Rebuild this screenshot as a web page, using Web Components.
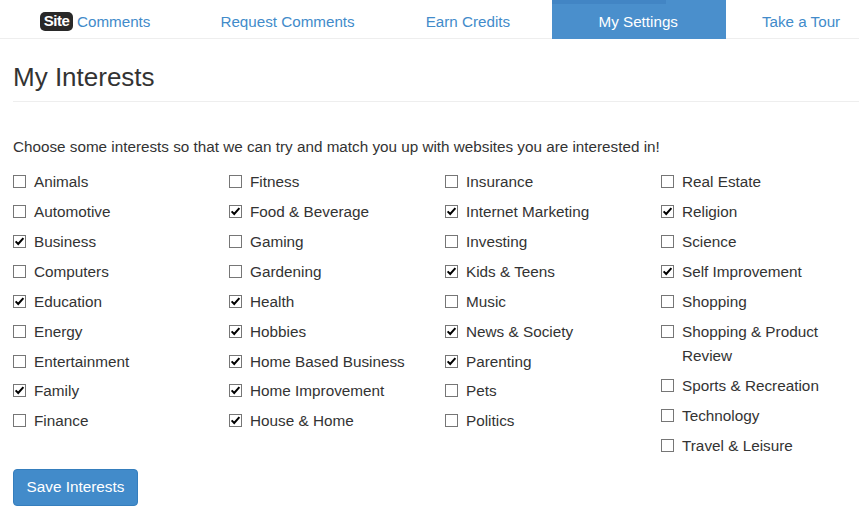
<!DOCTYPE html>
<html>
<head>
<meta charset="utf-8">
<title>My Interests</title>
<style>
html, body { margin: 0; padding: 0; background: #fff; }
body { font-family: "Liberation Sans", Arial, sans-serif; font-size: 15.3px; color: #333; overflow: hidden; }
</style>
</head>
<body>
<top-nav></top-nav>
<interests-page></interests-page>
<script>
const tabs = [
    { name: 'Comments', logo: true, left: 40, right: 35 },
    { name: 'Request Comments', left: 35, right: 35 },
    { name: 'Earn Credits', left: 36, right: 41.5 },
    { name: 'My Settings', active: true, left: 47, right: 48 },
    { name: 'Take a Tour', left: 36, right: 18 }
]

class TopNav extends HTMLElement {
    constructor() {
        super()
        this.attachShadow({ mode: 'open' })
    }

    connectedCallback() {
        this.shadowRoot.innerHTML = `<style>
:host { display: flex; height: 39px; box-sizing: border-box; border-bottom: 1px solid #eee; }
a { display: flex; align-items: center; height: 39px; box-sizing: border-box; color: #428bca; text-decoration: none; font-size: 15.2px; white-space: nowrap; position: relative; padding-top: 3px; }
a.active { background: #4a8fcc; color: #fff; }
a.active::before { content: ''; position: absolute; left: 0; top: 0; width: 114px; height: 4px; background: #4285c4; }
.logo { background: #292929; color: #fff; font-weight: bold; font-size: 15px; letter-spacing: -0.5px; border-radius: 5px; height: 19px; line-height: 18px; width: 33px; text-align: center; margin-right: 4px; }
</style>
${tabs.map(t => `<a href="#" class="${t.active ? 'active' : ''}" style="padding-left:${t.left}px;padding-right:${t.right}px">${t.logo ? '<span class="logo">Site</span>' : ''}${t.name}</a>`).join('')}`
    }
}

class InterestCheck extends HTMLElement {
    constructor() {
        super()
        this.attachShadow({ mode: 'open' })
    }

    connectedCallback() {
        const on = this.hasAttribute('checked')
        this.shadowRoot.innerHTML = `<style>
:host { display: block; margin-bottom: 5.85px; }
label { display: flex; align-items: flex-start; line-height: 24px; }
.box { flex: none; width: 13px; height: 13px; box-sizing: border-box; border: 1px solid #767676; background: #fff; margin: 5px 8px 0 0; position: relative; }
svg { position: absolute; left: 0; top: 0; }
</style>
<label><span class="box">${on ? '<svg width="11" height="11" viewBox="0 0 11 11"><path d="M1.6 5.4 L4.2 8 L9.4 2.2" fill="none" stroke="#000" stroke-width="2"/></svg>' : ''}</span><span><slot></slot></span></label>`
    }
}

const columns = [
    [['Animals'], ['Automotive'], ['Business', 1], ['Computers'], ['Education', 1], ['Energy'], ['Entertainment'], ['Family', 1], ['Finance']],
    [['Fitness'], ['Food & Beverage', 1], ['Gaming'], ['Gardening'], ['Health', 1], ['Hobbies', 1], ['Home Based Business', 1], ['Home Improvement', 1], ['House & Home', 1]],
    [['Insurance'], ['Internet Marketing', 1], ['Investing'], ['Kids & Teens', 1], ['Music'], ['News & Society', 1], ['Parenting', 1], ['Pets'], ['Politics']],
    [['Real Estate'], ['Religion', 1], ['Science'], ['Self Improvement', 1], ['Shopping'], ['Shopping & Product Review', 0, 'tall'], ['Sports & Recreation'], ['Technology'], ['Travel & Leisure']]
]

class InterestsPage extends HTMLElement {
    constructor() {
        super()
        this.attachShadow({ mode: 'open' })
    }

    connectedCallback() {
        const esc = s => s.replace(/&/g, '&amp;')
        this.shadowRoot.innerHTML = `<style>
:host { display: block; padding: 0 0 0 13px; }
h1 { font-size: 26px; font-weight: 500; line-height: 28px; margin: 0; padding: 24px 0 10px; border-bottom: 1px solid #eee; }
p { margin: 35px 0 13.45px; line-height: 20px; font-size: 15.25px; white-space: nowrap; }
.grid { display: grid; grid-template-columns: repeat(4, 216px); }
interest-check { width: 190px; }
interest-check.tall { margin-bottom: 6.35px; }
button { display: block; margin-top: 5.5px; font: inherit; font-size: 15.3px; color: #fff; background: #428bca; border: 1px solid #357ebd; border-radius: 4px; width: 125px; height: 37px; padding: 0 0 2px; }
</style>
<h1>My Interests</h1>
<p>Choose some interests so that we can try and match you up with websites you are interested in!</p>
<div class="grid">
${columns.map(c => `<div>${c.map(i => `<interest-check class="${i[2] || ''}" ${i[1] ? 'checked' : ''}>${esc(i[0])}</interest-check>`).join('')}</div>`).join('')}
</div>
<button>Save Interests</button>`
    }
}

customElements.define('top-nav', TopNav)
customElements.define('interest-check', InterestCheck)
customElements.define('interests-page', InterestsPage)
</script>
</body>
</html>
